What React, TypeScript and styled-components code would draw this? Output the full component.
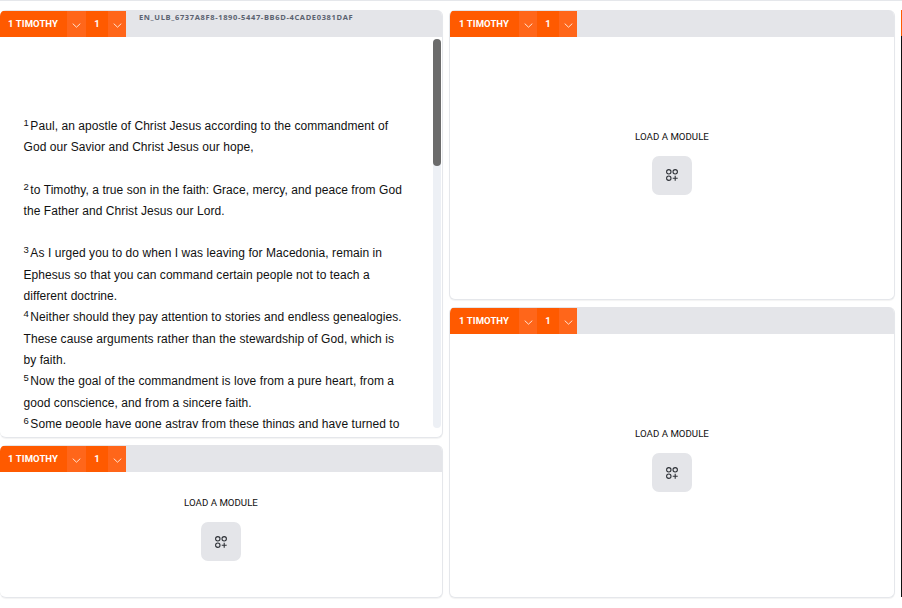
import React from 'react';
import styled, { createGlobalStyle } from 'styled-components';

const GlobalStyle = createGlobalStyle`
  html, body {
    margin: 0;
    padding: 0;
    background: #fff;
    overflow: hidden;
  }
  * {
    box-sizing: border-box;
  }
`;

const Page = styled.div`
  width: 902px;
  height: 608px;
  overflow: hidden;
  border-top: 1px solid #e5e7eb;
  padding-top: 9px;
  display: grid;
  grid-template-columns: 449px 446px 7px;
  font-family: 'Liberation Sans', Arial, sans-serif;
`;

const Column = styled.div<{ $pad?: number }>`
  display: flex;
  flex-direction: column;
  gap: 7px;
  height: 588px;
  padding-right: ${(p) => p.$pad ?? 0}px;
`;

const Panel = styled.section<{ $height: number; $left?: boolean }>`
  height: ${(p) => p.$height}px;
  flex: none;
  display: flex;
  flex-direction: column;
  background: #fff;
  border-radius: 6px;
  border-right: 1px solid #e5e7eb;
  border-bottom: 1px solid #e5e7eb;
  border-left: ${(p) => (p.$left ? 'none' : '1px solid #e5e7eb')};
  box-shadow: 0 1px 1px rgba(0, 0, 0, 0.05);
  overflow: hidden;
`;

const Header = styled.header`
  height: 27px;
  flex: none;
  padding-top: 1px;
  display: flex;
  background: #e4e5e9;
`;

const Book = styled.div<{ $width: number; $inset: number }>`
  width: ${(p) => p.$width}px;
  background: #ff5a00;
  color: #fff;
  font: 700 9.5px/25px Roboto, sans-serif;
  letter-spacing: 0.1px;
  padding-left: ${(p) => p.$inset}px;
  white-space: nowrap;
`;

const Chevron = styled.button<{ $width: number }>`
  width: ${(p) => p.$width}px;
  border: 0;
  padding: 2px 0 0;
  background: #ff661a;
  display: flex;
  align-items: center;
  justify-content: center;
`;

const Chapter = styled.div`
  width: 22px;
  background: #ff5a00;
  color: #fff;
  font: 700 9.5px/25px Roboto, sans-serif;
  text-align: center;
`;

const ModuleId = styled.div`
  margin-left: 13px;
  color: #5b6270;
  font: 700 7.5px/13px 'Open Sans', sans-serif;
  letter-spacing: 0.65px;
  white-space: nowrap;
`;

const Body = styled.div`
  flex: 1;
  min-height: 0;
  display: flex;
  overflow: hidden;
`;

const Scripture = styled.div`
  flex: 1;
  height: 391px;
  overflow: hidden;
  padding: 79px 27px 0 23.5px;
  color: #111;
  font-size: 12px;
  line-height: 21.33px;
  letter-spacing: 0.065px;
`;

const Verse = styled.p<{ $gap?: boolean }>`
  margin: 0 0 ${(p) => (p.$gap ? 21 : 0)}px;
`;

const Num = styled.sup`
  font-size: 9.5px;
  line-height: 0;
  margin-right: 1.5px;
  vertical-align: 4px;
`;

const Track = styled.div`
  width: 8px;
  height: 389px;
  margin: 2px 1px 0 0;
  flex: none;
  border-radius: 5px;
  background: #edf0f5;
`;

const Thumb = styled.div`
  height: 127px;
  border-radius: 4px;
  background: #6b6b6b;
`;

const Empty = styled.div`
  flex: 1;
  display: flex;
  flex-direction: column;
  align-items: center;
  justify-content: center;
  padding-bottom: 11px;
`;

const EmptyLabel = styled.div`
  color: #111;
  font: 400 9.7px/12px Roboto, sans-serif;
  margin-bottom: 13px;
`;

const AddButton = styled.button`
  width: 40px;
  height: 39px;
  border: 0;
  padding: 0;
  border-radius: 7px;
  background: #e4e5e9;
  display: flex;
  align-items: center;
  justify-content: center;
`;

// edge of the next panel, only one pixel of it is in view
const NextPanelEdge = styled.div`
  margin-left: 6px;
  width: 1px;
  height: 587px;
  background: #111;
  border-top: 26px solid #ff5a00;
`;

const ChevronIcon = () => (
  <svg width="9" height="5" viewBox="0 0 9 5" fill="none" stroke="#ffe3d3" strokeWidth="1">
    <path d="M.7.6l3.8 3.6L8.3.6" />
  </svg>
);

const ModulesIcon = () => (
  <svg width="12" height="12" viewBox="0 0 12 12" fill="none" stroke="#2f3238" strokeWidth="1.1">
    <circle cx="2.8" cy="2.8" r="2.2" />
    <circle cx="9.2" cy="2.8" r="2.2" />
    <circle cx="2.8" cy="9.2" r="2.2" />
    <path d="M9.2 6.8v5M6.7 9.2h5" />
  </svg>
);

const PanelHeader = ({ id, left }: { id?: string; left?: boolean }) => (
  <Header>
    <Book $width={left ? 67 : 69} $inset={left ? 8 : 9}>1 TIMOTHY</Book>
    <Chevron $width={left ? 19 : 18}>
      <ChevronIcon />
    </Chevron>
    <Chapter>1</Chapter>
    <Chevron $width={18}>
      <ChevronIcon />
    </Chevron>
    {id && <ModuleId>{id}</ModuleId>}
  </Header>
);

const EmptyBody = () => (
  <Empty>
    <EmptyLabel>LOAD A MODULE</EmptyLabel>
    <AddButton>
      <ModulesIcon />
    </AddButton>
  </Empty>
);

const verses: { n: number; text: string; gap?: boolean }[] = [
  { n: 1, text: 'Paul, an apostle of Christ Jesus according to the commandment of God our Savior and Christ Jesus our hope,', gap: true },
  { n: 2, text: 'to Timothy, a true son in the faith: Grace, mercy, and peace from God the Father and Christ Jesus our Lord.', gap: true },
  { n: 3, text: 'As I urged you to do when I was leaving for Macedonia, remain in Ephesus so that you can command certain people not to teach a different doctrine.' },
  { n: 4, text: 'Neither should they pay attention to stories and endless genealogies. These cause arguments rather than the stewardship of God, which is by faith.' },
  { n: 5, text: 'Now the goal of the commandment is love from a pure heart, from a good conscience, and from a sincere faith.' },
  { n: 6, text: 'Some people have gone astray from these things and have turned to foolish talk.' },
];

export default function App() {
  return (
    <Page>
      <GlobalStyle />
      <Column $pad={6}>
        <Panel $left $height={428}>
          <PanelHeader left id="EN_ULB_6737A8F8-1890-5447-BB6D-4CADE0381DAF" />
          <Body>
            <Scripture>
              {verses.map((v) => (
                <Verse key={v.n} $gap={v.gap}>
                  <Num>{v.n}</Num>
                  {v.text}
                </Verse>
              ))}
            </Scripture>
            <Track>
              <Thumb />
            </Track>
          </Body>
        </Panel>
        <Panel $left $height={153}>
          <PanelHeader left />
          <EmptyBody />
        </Panel>
      </Column>
      <Column>
        <Panel $height={290}>
          <PanelHeader />
          <EmptyBody />
        </Panel>
        <Panel $height={291}>
          <PanelHeader />
          <EmptyBody />
        </Panel>
      </Column>
      <NextPanelEdge />
    </Page>
  );
}
